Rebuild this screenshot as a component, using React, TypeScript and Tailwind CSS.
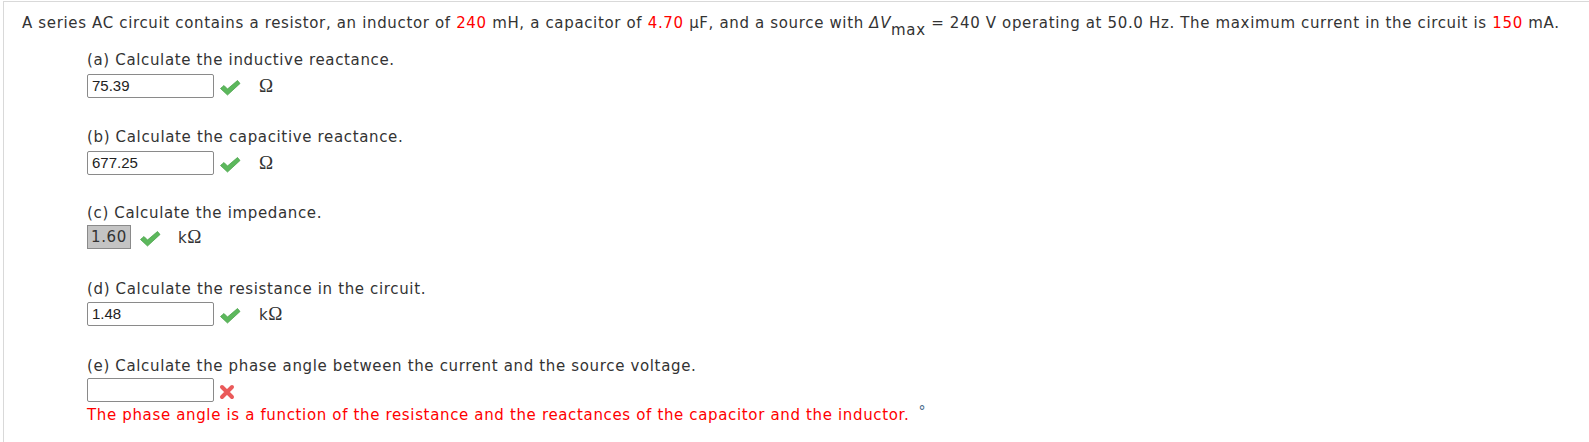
import React from 'react';

const font = { fontFamily: '"DejaVu Sans", Verdana, sans-serif', letterSpacing: '0.65px' };

function Check() {
  return (
    <svg width="22" height="17" viewBox="0 0 22 17" className="shrink-0">
      <path d="M1.5 9.5 L5 6.5 L8.5 10 L18.5 1.5 L21 4.5 L8.5 16 Z" fill="#5cb85c" stroke="#4aa24a" strokeWidth="0.8" strokeLinejoin="round" />
    </svg>
  );
}

function Cross() {
  return (
    <svg width="16" height="16" viewBox="0 0 16 16" className="shrink-0">
      <path d="M3 3 L13 13 M13 3 L3 13" fill="none" stroke="#ea5a5a" strokeWidth="4" strokeLinecap="round" />
    </svg>
  );
}

const omega = { fontFamily: '"Liberation Serif", "Times New Roman", serif', letterSpacing: '0' };

function Unit({ k }: { k?: boolean }) {
  return (
    <span className="text-[19px] text-[#333]">
      {k && <span className="text-[15px]">k</span>}
      <span style={omega}>Ω</span>
    </span>
  );
}

function Answer({ value, k }: { value: string; k?: boolean }) {
  return (
    <div className="flex items-center h-[24px]">
      <div className="w-[127px] h-[24px] border border-[#8a8a8a] rounded-[2px] px-[4px] flex items-center text-[15px] text-[#222]" style={{ fontFamily: '"Liberation Sans", Arial, sans-serif', letterSpacing: '0' }}>
        {value}
      </div>
      <div className="ml-[5px] mt-[3px]"><Check /></div>
      <span className="ml-[18px]"><Unit k={k} /></span>
    </div>
  );
}

export default function App() {
  return (
    <div className="w-full h-[442px] bg-white text-[#333] text-[15px]" style={font}>
      <div className="ml-[3px] mt-[1px] h-[441px] border-t border-l border-[#d9d9d9] pl-[18px] pt-[11px]">
        <p className="leading-[20px] whitespace-nowrap">
          A series AC circuit contains a resistor, an inductor of <span className="text-[#f00]">240</span> mH, a capacitor of{' '}
          <span className="text-[#f00]">4.70</span> μF, and a source with <i>ΔV</i>
          <span className="relative top-[7px]">max</span> = 240 V operating at 50.0 Hz. The maximum current in the circuit is{' '}
          <span className="text-[#f00]">150</span> mA.
        </p>

        <div className="ml-[65px]">
          <div className="mt-[17px]">
            <div className="leading-[20px] mb-[4px]">(a) Calculate the inductive reactance.</div>
            <Answer value="75.39" />
          </div>

          <div className="mt-[29px]">
            <div className="leading-[20px] mb-[4px]">(b) Calculate the capacitive reactance.</div>
            <Answer value="677.25" />
          </div>

          <div className="mt-[28px]">
            <div className="leading-[20px] mb-[2px]">(c) Calculate the impedance.</div>
            <div className="flex items-center h-[24px]">
              <div className="h-[24px] bg-[#c4c4c4] border border-[#8a8a8a] px-[3px] flex items-center text-[15px] text-[#333]">1.60</div>
              <div className="ml-[8px] mt-[3px]"><Check /></div>
              <span className="ml-[17px]"><Unit k /></span>
            </div>
          </div>

          <div className="mt-[30px]">
            <div className="leading-[20px] mb-[3px]">(d) Calculate the resistance in the circuit.</div>
            <Answer value="1.48" k />
          </div>

          <div className="mt-[30px]">
            <div className="leading-[20px] mb-[2px]">(e) Calculate the phase angle between the current and the source voltage.</div>
            <div className="flex items-center h-[24px]">
              <div className="w-[127px] h-[24px] border border-[#8a8a8a] rounded-[2px]" />
              <div className="ml-[5px] mt-[3px]"><Cross /></div>
            </div>
            <div className="leading-[20px] mt-[3px] text-[#f00]">
              The phase angle is a function of the resistance and the reactances of the capacitor and the inductor.
              <span className="ml-[9px] text-[#4a6a8a] text-[14px] relative top-[-4px]">°</span>
            </div>
          </div>
        </div>
      </div>
    </div>
  );
}
